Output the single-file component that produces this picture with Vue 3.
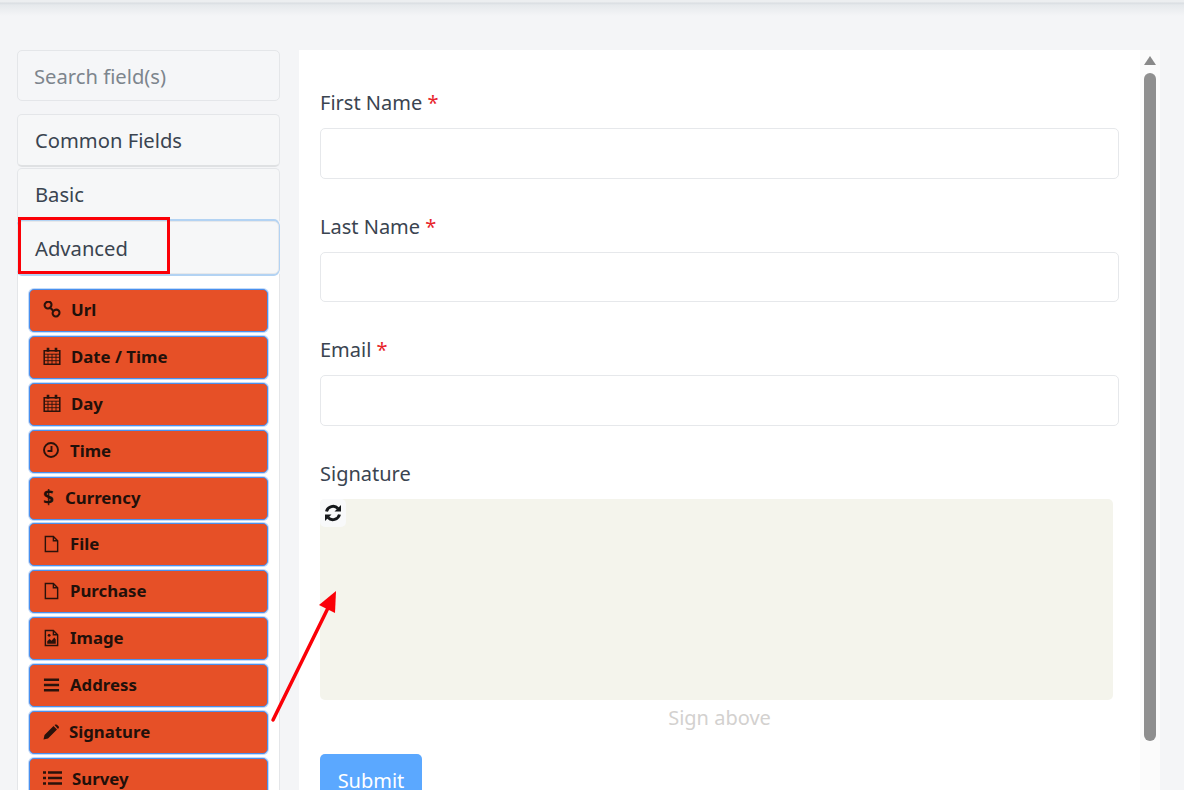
<script setup>
const cal = [
  { d: 'M1.200 3.800h15.600v13.400h-15.600z', s: 1.5 },
  { d: 'M1.500 7.200h15M1.500 10.300h15M1.500 13.700h15M5 7v10M9 7v10M13 7v10', s: 0.9 },
  { d: 'M5 0.800v4M13 0.800v4', s: 2.6 }
]
const doc = [
  { d: 'M2.500 1h8.500l4.500 4.500V17H2.500zM11 1v4.500h4.500', s: 1.5 }
]
const fields = [
  { name: 'Url', w: 18, gap: 10, paths: [
    { d: 'M2.800 1.800a3.200 3.200 0 1 0 4.500 4.500a3.200 3.200 0 1 0-4.500-4.500zM10.800 9.800a3.200 3.200 0 1 0 4.500 4.500a3.200 3.200 0 1 0-4.500-4.500zM7 6.500l4 4', s: 2.100 }
  ] },
  { name: 'Date / Time', w: 18, gap: 10, paths: cal },
  { name: 'Day', w: 18, gap: 10, paths: cal },
  { name: 'Time', w: 16, gap: 11, vb: '0 0 16 16', paths: [
    { d: 'M8 1a7 7 0 1 0 0 14a7 7 0 1 0 0-14zM8.500 4v5H4.500', s: 1.900 }
  ] },
  { name: 'Currency', glyph: '$', w: 11, gap: 11 },
  { name: 'File', w: 17, gap: 10, paths: doc },
  { name: 'Purchase', w: 17, gap: 10, paths: doc },
  { name: 'Image', w: 17, gap: 10, paths: [
    ...doc,
    { d: 'M4.500 15v-2.500l2.500-2.500l2 2l3-3.500l1.500 2V15z', f: true },
    { d: 'M5 6.200a1.500 1.500 0 1 0 3 0a1.500 1.500 0 1 0-3 0z', f: true }
  ] },
  { name: 'Address', w: 17, gap: 10, paths: [
    { d: 'M1 3.500h16M1 9h16M1 14.500h16', s: 2.600 }
  ] },
  { name: 'Signature', w: 16, gap: 10, vb: '0 0 16 16', paths: [
    { d: 'M0.500 15.500l1-4.500L10.500 2l3.500 3.500L5 14.500zM11.500 1l1-0.500q0.800-0.300 1.500 0.300l1.700 1.700q0.500 0.700 0 1.500l-0.700 1z', f: true }
  ] },
  { name: 'Survey', w: 19, gap: 10, vb: '0 0 19 16', paths: [
    { d: 'M0 2.500h3M0 8h3M0 13.500h3M5 2.500h14M5 8h14M5 13.500h14', s: 2.600 }
  ] }
]
const inputs = ['First Name', 'Last Name', 'Email']
</script>

<template>
  <div class="page">
    <div class="topbar"></div>
    <div class="layout">
      <aside class="side">
        <input class="search" placeholder="Search field(s)" />
        <div class="accordion">
          <div class="acc-head">Common Fields</div>
          <div class="acc-head basic">Basic</div>
          <div class="acc-head active">Advanced</div>
          <div class="acc-body">
            <button v-for="f in fields" :key="f.name" class="field-btn" type="button">
              <span v-if="f.glyph" class="glyph" :style="{ width: f.w + 'px', marginRight: f.gap + 'px' }">{{ f.glyph }}</span>
              <svg
                v-else
                class="ico"
                :style="{ width: f.w + 'px', marginRight: f.gap + 'px' }"
                :viewBox="f.vb || '0 0 18 18'"
              >
                <path
                  v-for="(p, i) in f.paths"
                  :key="i"
                  :d="p.d"
                  :fill="p.f ? 'currentColor' : 'none'"
                  :stroke="p.f ? 'none' : 'currentColor'"
                  :stroke-width="p.s || 0"
                />
              </svg>
              <span>{{ f.name }}</span>
            </button>
          </div>
        </div>
      </aside>

      <main class="card">
        <form class="form" @submit.prevent>
          <div v-for="l in inputs" :key="l" class="group">
            <label class="label">{{ l }} <span class="req">*</span></label>
            <input class="text" />
          </div>
          <div class="group sig">
            <label class="label">Signature</label>
            <div class="pad">
              <span class="reset">
                <svg viewBox="0 0 18 18" class="reset-ico">
                  <path d="M2.500 7.500A6.800 6.800 0 0 1 14 4.500" fill="none" stroke="currentColor" stroke-width="3" />
                  <path d="M17 1v6.500h-6.500z" fill="currentColor" />
                  <path d="M15.500 10.500A6.800 6.800 0 0 1 4 13.500" fill="none" stroke="currentColor" stroke-width="3" />
                  <path d="M1 17v-6.500h6.500z" fill="currentColor" />
                </svg>
              </span>
            </div>
            <div class="sign-above">Sign above</div>
          </div>
          <button class="submit" type="submit">Submit</button>
        </form>
        <div class="scroll">
          <span class="arrow-up"></span>
          <span class="thumb"></span>
        </div>
      </main>
    </div>

    <div class="red-box"></div>
    <svg class="red-arrow" viewBox="0 0 80 150">
      <path d="M5 134L60 22" stroke="#fb0007" stroke-width="3.500" stroke-linecap="round" fill="none" />
      <path d="M68 5L67 27L51 19z" fill="#fb0007" />
    </svg>
  </div>
</template>

<style scoped>
.page {
  position: relative;
  height: 790px;
  overflow: hidden;
  background: #f4f5f7;
  font-family: "Noto Sans", "Open Sans", sans-serif;
  color: #3a4450;
}
.topbar {
  height: 16px;
  background: linear-gradient(#eceef0 0, #eceef0 2px, #d9dde1 3px, #e6e9ec 5px, #f4f5f7 100%);
}
.layout {
  display: flex;
  gap: 19px;
  padding: 34px 24px 0 17px;
}
.side {
  width: 263px;
  flex: none;
}
.search {
  display: block;
  box-sizing: border-box;
  width: 100%;
  height: 51px;
  padding: 0 16px;
  border: 1px solid #e4e6e9;
  border-radius: 5px;
  background: #f5f6f8;
  font: inherit;
  font-size: 20.200px;
  outline: none;
}
.search::placeholder {
  color: #7d858d;
}
.accordion {
  margin-top: 13px;
}
.acc-head {
  box-sizing: border-box;
  height: 53px;
  padding-left: 17px;
  display: flex;
  align-items: center;
  border: 1px solid #e4e6e9;
  border-radius: 5px;
  border-bottom: 2px solid #dfe1e3;
  background: #f6f7f8;
  font-size: 20.200px;
  margin-bottom: 1px;
}
.acc-head.basic {
  border-bottom: 0;
  border-radius: 5px 5px 0 0;
  margin-bottom: 0;
  padding-bottom: 2px;
}
.acc-head.active {
  height: 53px;
  width: 262px;
  margin-bottom: 0;
  border: 1px solid #e6e8eb;
  box-shadow: 0 -2px 0 #b3d3f3, 0 2px 0 #b3d3f3, 1px 0 0 #b3d3f3;
  position: relative;
}
.acc-body {
  box-sizing: border-box;
  display: flex;
  flex-direction: column;
  gap: 3.900px;
  padding: 15px 11px 0;
  background: #fff;
  border-left: 1px solid #e4e6e9;
  border-right: 1px solid #e4e6e9;
}
.field-btn {
  box-sizing: border-box;
  flex: none;
  display: flex;
  align-items: center;
  height: 43px;
  padding: 0 0 2px 13px;
  border: 1px solid #4a90ee;
  border-radius: 5px;
  box-shadow: 0 0 0 1px rgba(120, 175, 245, 0.45);
  background: #e65027;
  color: #22100a;
  font: inherit;
  font-size: 16.800px;
  font-weight: 700;
  text-align: left;
}
.ico {
  flex: none;
  height: 18px;
  color: #2a120b;
}
.glyph {
  flex: none;
  font-size: 19px;
}
.card {
  flex: 1;
  display: flex;
  background: #fff;
  min-width: 0;
  height: 740px;
}
.form {
  flex: 1;
  min-width: 0;
  padding: 39px 21px 0 21px;
}
.group {
  margin-bottom: 34px;
}
.group.sig {
  margin-bottom: 22px;
}
.label {
  display: block;
  height: 39px;
  font-size: 20px;
  line-height: 28px;
}
.req {
  color: #e8252b;
}
.text {
  display: block;
  box-sizing: border-box;
  width: 100%;
  height: 50.500px;
  border: 1px solid #e6e8eb;
  border-radius: 5px;
  background: #fff;
  outline: none;
}
.sig .label {
  height: 39.500px;
}
.pad {
  box-sizing: border-box;
  width: 793px;
  height: 201px;
  border-radius: 5px;
  background: #f4f4ec;
}
.reset {
  display: flex;
  align-items: center;
  justify-content: center;
  width: 26px;
  height: 28px;
  border-radius: 5px;
  background: #f8f9fa;
}
.reset-ico {
  width: 18px;
  height: 18px;
  color: #15181b;
}
.sign-above {
  padding-top: 4px;
  text-align: center;
  font-size: 20px;
  line-height: 28px;
  color: #d3d1cf;
}
.submit {
  display: block;
  box-sizing: border-box;
  width: 102px;
  height: 52px;
  border: 0;
  border-radius: 5px;
  background: #5ba8ff;
  color: #fff;
  font: inherit;
  font-size: 20px;
}
.scroll {
  flex: none;
  position: relative;
  width: 20px;
  background: #fbfbfb;
}
.arrow-up {
  position: absolute;
  left: 4px;
  top: 6px;
  border-left: 6px solid transparent;
  border-right: 6px solid transparent;
  border-bottom: 9px solid #8a8a8a;
}
.thumb {
  position: absolute;
  left: 4px;
  top: 23px;
  width: 12px;
  height: 668px;
  border-radius: 6px;
  background: #8f8f8f;
}
.red-box {
  position: absolute;
  left: 18px;
  top: 217px;
  box-sizing: border-box;
  width: 152px;
  height: 57px;
  border: 3px solid #fb0007;
  pointer-events: none;
}
.red-arrow {
  position: absolute;
  left: 268px;
  top: 586px;
  width: 80px;
  height: 150px;
  pointer-events: none;
}
</style>

<style>
body {
  margin: 0;
  background: #fff;
}
</style>
